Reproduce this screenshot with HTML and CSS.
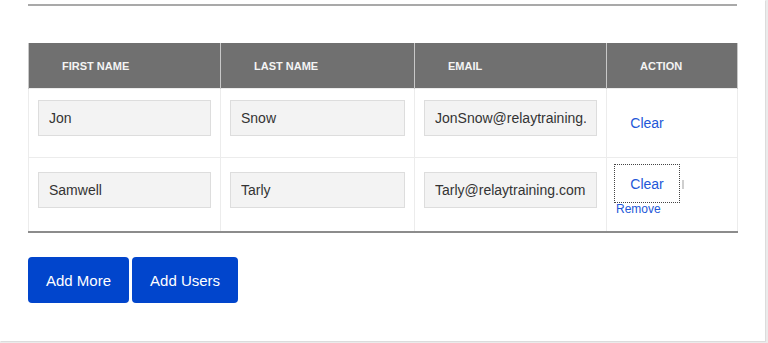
FILE: index.html
```html
<!DOCTYPE html>
<html lang="en">
<head>
  <meta charset="UTF-8">
  <title>Add Users</title>
  <link rel="stylesheet" href="styles.css">
</head>
<body>
  <div class="card">
    <div class="rule"></div>

    <table class="users-table">
      <colgroup>
        <col class="col-first">
        <col class="col-last">
        <col class="col-email">
        <col class="col-action">
      </colgroup>
      <thead>
        <tr>
          <th>First Name</th>
          <th>Last Name</th>
          <th>Email</th>
          <th>Action</th>
        </tr>
      </thead>
      <tbody>
        <tr>
          <td><input type="text" value="Jon"></td>
          <td><input type="text" value="Snow"></td>
          <td><input type="text" value="JonSnow@relaytraining.com"></td>
          <td class="action-cell">
            <div class="action-line">
              <button class="clear-btn">Clear</button>
            </div>
          </td>
        </tr>
        <tr class="last-row">
          <td><input type="text" value="Samwell"></td>
          <td><input type="text" value="Tarly"></td>
          <td><input type="text" value="Tarly@relaytraining.com"></td>
          <td class="action-cell with-remove">
            <div class="action-line">
              <button class="clear-btn focused">Clear</button>
              <span class="divider"></span>
            </div>
            <a href="#" class="remove-link">Remove</a>
          </td>
        </tr>
      </tbody>
    </table>

    <div class="form-buttons">
      <button class="primary-btn">Add More</button>
      <button class="primary-btn">Add Users</button>
    </div>
  </div>
</body>
</html>
```

FILE: styles.css
```css
body {
  margin: 0;
  background: #ebebeb;
  font-family: "Liberation Sans", Arial, sans-serif;
  height: 343px;
  overflow: hidden;
}
.card {
  width: 709px;
  background: #ffffff;
  padding: 4px 28px 38px 28px;
  box-shadow: 1px 1px 0 #dcdcdc;
}
.rule {
  border-top: 2px solid #a9a9a9;
  margin-bottom: 37px;
}
.users-table {
  width: 709px;
  border-collapse: collapse;
  table-layout: fixed;
}
.col-first { width: 192px; }
.col-last { width: 194px; }
.col-email { width: 192px; }
.col-action { width: 131px; }
.users-table th {
  background: #707070;
  color: #f4f4f4;
  font-size: 11px;
  font-weight: bold;
  text-transform: uppercase;
  text-align: left;
  height: 45px;
  padding: 0 0 0 33px;
  border: 1px solid #c8c8c8;
  border-top: none;
  border-bottom: none;
}
.users-table td {
  border: 1px solid #ececec;
  padding: 11px 9px 12px 9px;
  vertical-align: middle;
}
.users-table tr.last-row td {
  border-bottom: 2px solid #8c8c8c;
}
.users-table input {
  display: block;
  width: 100%;
  box-sizing: border-box;
  height: 36px;
  margin: 0 0 9px 0;
  padding: 0 10px;
  background: #f3f3f3;
  border: 1px solid #dddddd;
  color: #333;
  font-family: "Liberation Sans", Arial, sans-serif;
  font-size: 14px;
}
.users-table td.action-cell {
  padding: 7px 8px;
}
.action-line {
  display: flex;
  align-items: center;
  gap: 3px;
}
.clear-btn {
  width: 64px;
  height: 37px;
  background: transparent;
  border: none;
  color: #2357d8;
  font-family: "Liberation Sans", Arial, sans-serif;
  font-size: 14px;
  cursor: pointer;
}
.clear-btn.focused {
  outline: 1px dotted #444;
}
.divider {
  display: inline-block;
  width: 2px;
  height: 9px;
  margin-top: 2px;
  background: #cfcfcf;
}
.remove-link {
  display: block;
  margin: 0 0 8px 1px;
  color: #2357d8;
  font-size: 12px;
  line-height: 14px;
  text-decoration: none;
}
.form-buttons {
  display: flex;
  gap: 3px;
  margin-top: 24px;
}
.primary-btn {
  height: 46px;
  padding: 0 18px;
  background: #0145cc;
  color: #ffffff;
  border: none;
  border-radius: 4px;
  font-family: "Liberation Sans", Arial, sans-serif;
  font-size: 15px;
  cursor: pointer;
}
```
